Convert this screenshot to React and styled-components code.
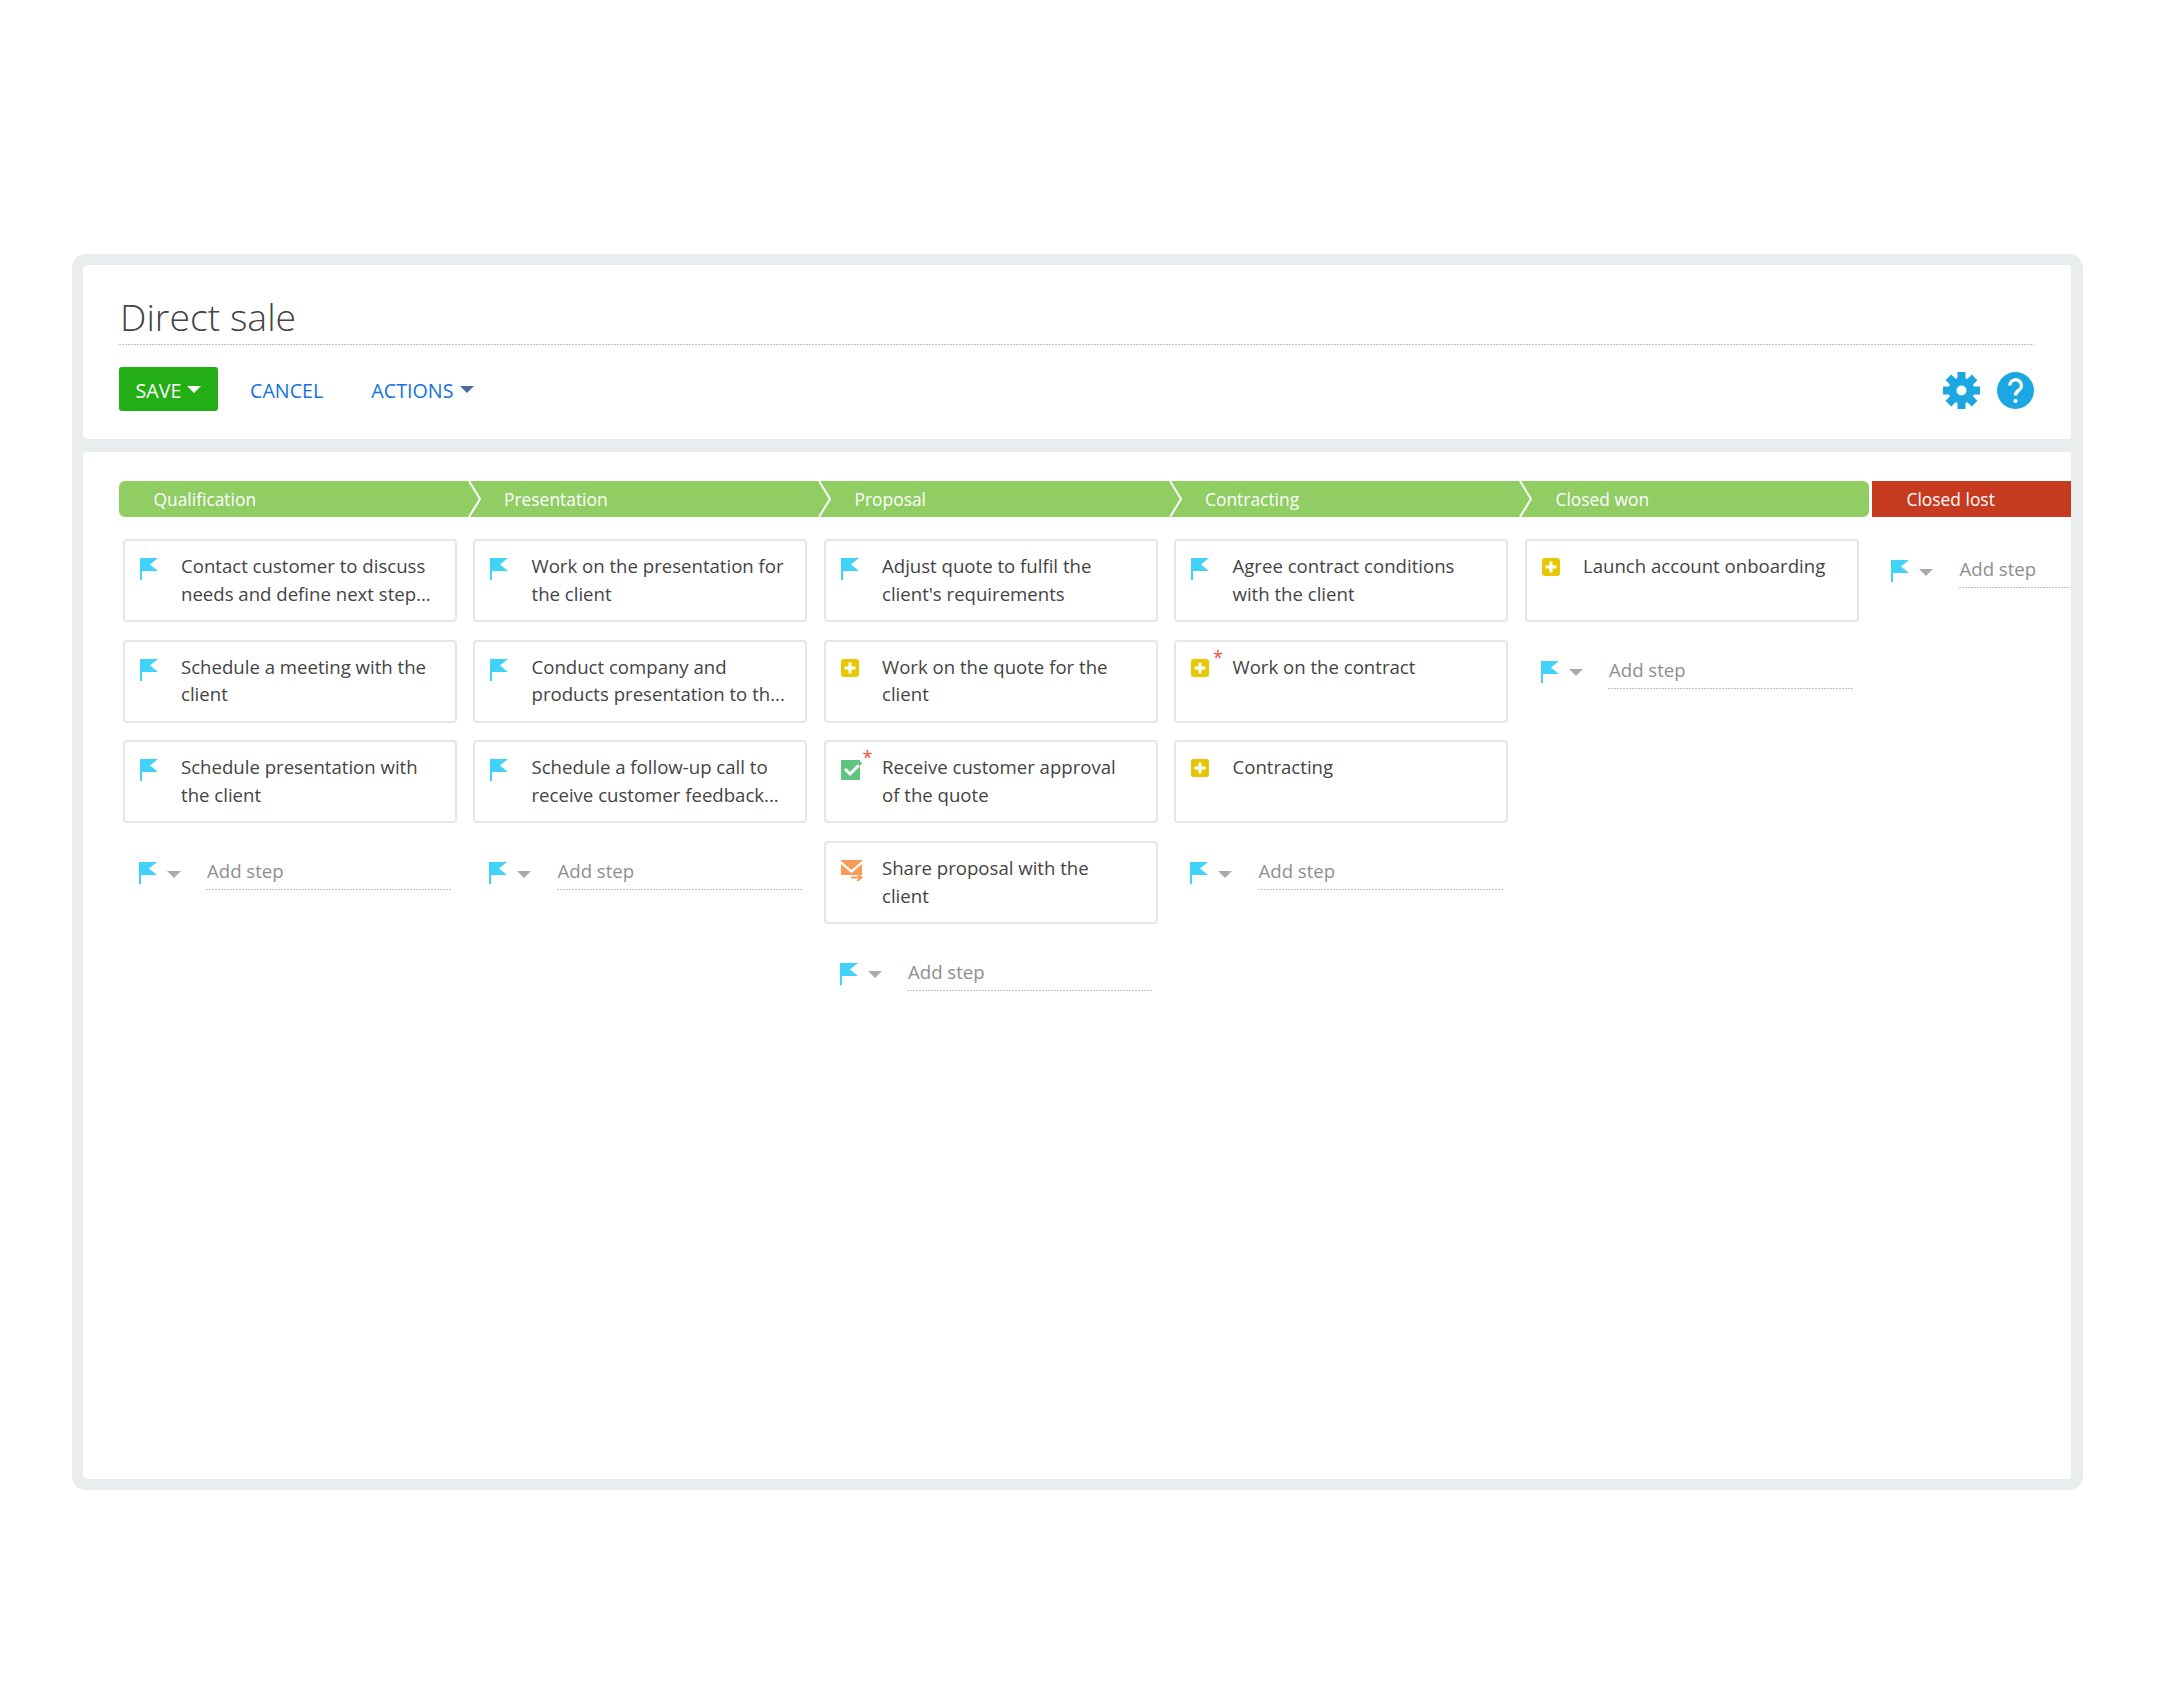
import React from "react";
import styled, { createGlobalStyle, css } from "styled-components";

const Global = createGlobalStyle`
  html, body { margin: 0; padding: 0; background: #fff; }
  body { font-family: "Open Sans", "Liberation Sans", sans-serif; color: #444; }
`;

const dottedRule = css`
  background: repeating-linear-gradient(90deg, #c2c2c2 0 2px, transparent 2px 3px) left bottom / 100% 1px no-repeat;
`;

const Page = styled.div`
  width: 2164px;
  height: 1692px;
  padding: 254px 81px 0 72px;
  box-sizing: border-box;
`;
const Frame = styled.div`
  height: 1236px;
  box-sizing: border-box;
  background: #e9eded;
  border-radius: 14px;
  padding: 11px 12px 11px 11px;
  display: flex;
  flex-direction: column;
  gap: 13px;
`;
const Header = styled.header`
  height: 174px;
  flex: none;
  box-sizing: border-box;
  background: #fff;
  border-radius: 4px;
  padding: 0 37px 0 36px;
`;
const Title = styled.h1`
  margin: 0;
  height: 80px;
  box-sizing: border-box;
  padding: 27px 0 0 1px;
  font-size: 37.400px;
  line-height: 50px;
  font-weight: 300;
  color: #444;
  ${dottedRule}
`;
const Toolbar = styled.div`
  display: flex;
  align-items: center;
  margin-top: 22px;
  height: 44px;
`;
const SaveButton = styled.button`
  width: 99px;
  height: 44px;
  border: 0;
  border-radius: 3px;
  background: #22ae14;
  color: #fff;
  font: 400 19.700px "Open Sans", sans-serif;
  padding: 2px 0 0;
  display: flex;
  align-items: center;
  justify-content: center;
  gap: 6px;
`;
const LinkButton = styled.button`
  border: 0;
  background: none;
  padding: 2px 0 0;
  margin-left: ${(p) => p.$gap}px;
  color: #1372e0;
  font: 400 19.700px "Open Sans", sans-serif;
  display: flex;
  align-items: center;
  gap: 7px;
`;
const Caret = styled.span`
  width: 0;
  height: 0;
  border-left: 7px solid transparent;
  border-right: 7px solid transparent;
  border-top: 7px solid ${(p) => p.$color};
  margin-top: -2px;
`;
const Tools = styled.div`
  margin-left: auto;
  padding-top: 2px;
  display: flex;
  align-items: center;
  gap: 17px;
  & svg { display: block; }
`;
const Board = styled.section`
  flex: 1;
  background: #fff;
  border-radius: 4px;
  padding: 29px 0 0 36px;
  overflow: hidden;
`;
const Stages = styled.div`
  display: flex;
  height: 36px;
`;
const Stage = styled.div`
  position: relative;
  flex: ${(p) => (p.$lost ? "1" : "none")};
  width: ${(p) => (p.$lost ? "auto" : p.$last ? "348px" : "350.5px")};
  box-sizing: border-box;
  padding-left: 34.500px;
  margin-left: ${(p) => (p.$lost ? "3px" : "0")};
  background: ${(p) => (p.$lost ? "#c63a1f" : "#90cd63")};
  border-radius: ${(p) => (p.$first ? "6px 0 0 6px" : p.$last ? "0 6px 6px 0" : "0")};
  color: #fff;
  font-size: 17.400px;
  line-height: 36px;
`;
const Chevron = styled.svg`
  position: absolute;
  right: -12px;
  top: 0;
  z-index: 1;
`;
const Columns = styled.div`
  display: flex;
  margin-top: 22px;
`;
const Column = styled.div`
  flex: none;
  width: 350.5px;
  box-sizing: border-box;
  padding-left: 3.500px;
  display: flex;
  flex-direction: column;
  gap: 17.700px;
`;
const Card = styled.div`
  width: 334px;
  height: 83px;
  box-sizing: border-box;
  border: 2px solid #e6e6e6;
  border-radius: 4px;
  display: flex;
  padding: 11px 0 0 15px;
`;
const IconSlot = styled.div`
  position: relative;
  flex: none;
  width: 41.500px;
  padding-top: 6px;
`;
const Required = styled.span`
  position: absolute;
  left: 22px;
  top: -6px;
  color: #f0523c;
  font-size: 18px;
  line-height: 20px;
`;
const CardText = styled.div`
  max-width: 256px;
  font-size: 18.600px;
  line-height: 27.600px;
  color: #444;
`;
const AddRow = styled.div`
  width: 332px;
  height: 54px;
  display: flex;
  align-items: flex-start;
  padding: 15px 0 0 16px;
  box-sizing: border-box;
`;
const AddPicker = styled.div`
  width: 67.500px;
  flex: none;
  display: flex;
  align-items: center;
  gap: 8px;
  padding-top: 6px;
`;
const GreyCaret = styled.span`
  width: 0;
  height: 0;
  border-left: 7px solid transparent;
  border-right: 7px solid transparent;
  border-top: 7px solid #aaa;
  margin-top: 2px;
`;
const AddInput = styled.div`
  flex: none;
  width: 245px;
  height: 34px;
  font-size: 18.600px;
  line-height: 30px;
  color: #8f8f8f;
  padding-left: 1px;
  box-sizing: border-box;
  ${dottedRule}
`;

const Flag = () => (
  <svg width="20" height="22" viewBox="0 0 20 22">
    <path d="M0 0H18L10 6.500L18 13H2V22H0Z" fill="#41d3f7" />
  </svg>
);
const Plus = () => (
  <svg width="18" height="18" viewBox="0 0 18 18">
    <rect width="18" height="18" rx="3" fill="#e8c600" />
    <path d="M7.500 3.500H10.500V7.500H14.500V10.500H10.500V14.500H7.500V10.500H3.500V7.500H7.500Z" fill="#fff" />
  </svg>
);
const Check = () => (
  <svg width="21" height="21" viewBox="0 0 21 21">
    <rect y="1" width="19" height="20" fill="#5fc47f" />
    <path d="M4 10L9 15L19 5" fill="none" stroke="#fff" strokeWidth="3" />
    <path d="M17.500 6.500L20.500 3.500" stroke="#5fc47f" strokeWidth="2" />
  </svg>
);
const Mail = () => (
  <svg width="22" height="21" viewBox="0 0 22 21">
    <path d="M0 0H21V1L10.500 10L0 1Z M0 4L10.500 13L21 4V15H0Z" fill="#f99b58" />
    <path d="M10 17.500H20M16 13.500L20.500 17.500L16 21" fill="none" stroke="#f99b58" strokeWidth="2" />
  </svg>
);
const Gear = () => (
  <svg width="37" height="37" viewBox="0 0 37 37" fill="#1ba7e1">
    <circle cx="18.500" cy="18.500" r="13" />
    {[0, 45, 90, 135].map((a) => (
      <rect key={a} x="14.500" y="0" width="8" height="37" transform={`rotate(${a} 18.500 18.500)`} />
    ))}
    <circle cx="18.500" cy="18.500" r="5" fill="#fff" />
  </svg>
);
const Help = () => (
  <svg width="37" height="37" viewBox="0 0 37 37">
    <circle cx="18.500" cy="18.500" r="18.500" fill="#1ba7e1" />
    <path d="M12.800 13.500A5.800 5.800 0 1 1 21.500 18.500C19.500 19.800 18.500 20.800 18.500 23.500" fill="none" stroke="#fff" strokeWidth="3.300" />
    <circle cx="18.500" cy="29" r="2.100" fill="#fff" />
  </svg>
);
const icons = { flag: Flag, plus: Plus, check: Check, mail: Mail };

const columns = [
  { name: "Qualification", steps: [
    ["flag", "Contact customer to discuss needs and define next step..."],
    ["flag", "Schedule a meeting with the client"],
    ["flag", "Schedule presentation with the client"],
  ]},
  { name: "Presentation", steps: [
    ["flag", "Work on the presentation for the client"],
    ["flag", "Conduct company and products presentation to th..."],
    ["flag", "Schedule a follow-up call to receive customer feedback..."],
  ]},
  { name: "Proposal", steps: [
    ["flag", "Adjust quote to fulfil the client's requirements"],
    ["plus", "Work on the quote for the client"],
    ["check", "Receive customer approval of the quote", true],
    ["mail", "Share proposal with the client"],
  ]},
  { name: "Contracting", steps: [
    ["flag", "Agree contract conditions with the client"],
    ["plus", "Work on the contract", true],
    ["plus", "Contracting"],
  ]},
  { name: "Closed won", steps: [
    ["plus", "Launch account onboarding"],
  ]},
  { name: "Closed lost", lost: true, steps: [] },
];

function AddStep() {
  return (
    <AddRow>
      <AddPicker>
        <Flag />
        <GreyCaret />
      </AddPicker>
      <AddInput>Add step</AddInput>
    </AddRow>
  );
}

export default function App() {
  return (
    <Page>
      <Global />
      <Frame>
        <Header>
          <Title>Direct sale</Title>
          <Toolbar>
            <SaveButton>SAVE <Caret $color="#fff" /></SaveButton>
            <LinkButton $gap={32}>CANCEL</LinkButton>
            <LinkButton $gap={48}>ACTIONS <Caret $color="#4a6f9f" /></LinkButton>
            <Tools>
              <Gear />
              <Help />
            </Tools>
          </Toolbar>
        </Header>
        <Board>
          <Stages>
            {columns.map((c, i) => (
              <Stage key={c.name} $first={i === 0} $last={i === 4} $lost={c.lost}>
                {c.name}
                {i < 4 && (
                  <Chevron width="14" height="36" viewBox="0 0 14 36">
                    <path d="M1 0L12 18L1 36" fill="#90cd63" stroke="#fff" strokeWidth="2" />
                  </Chevron>
                )}
              </Stage>
            ))}
          </Stages>
          <Columns>
            {columns.map((c) => (
              <Column key={c.name}>
                {c.steps.map(([icon, text, req]) => {
                  const Icon = icons[icon];
                  return (
                    <Card key={text}>
                      <IconSlot>
                        <Icon />
                        {req && <Required>*</Required>}
                      </IconSlot>
                      <CardText>{text}</CardText>
                    </Card>
                  );
                })}
                <AddStep />
              </Column>
            ))}
          </Columns>
        </Board>
      </Frame>
    </Page>
  );
}
